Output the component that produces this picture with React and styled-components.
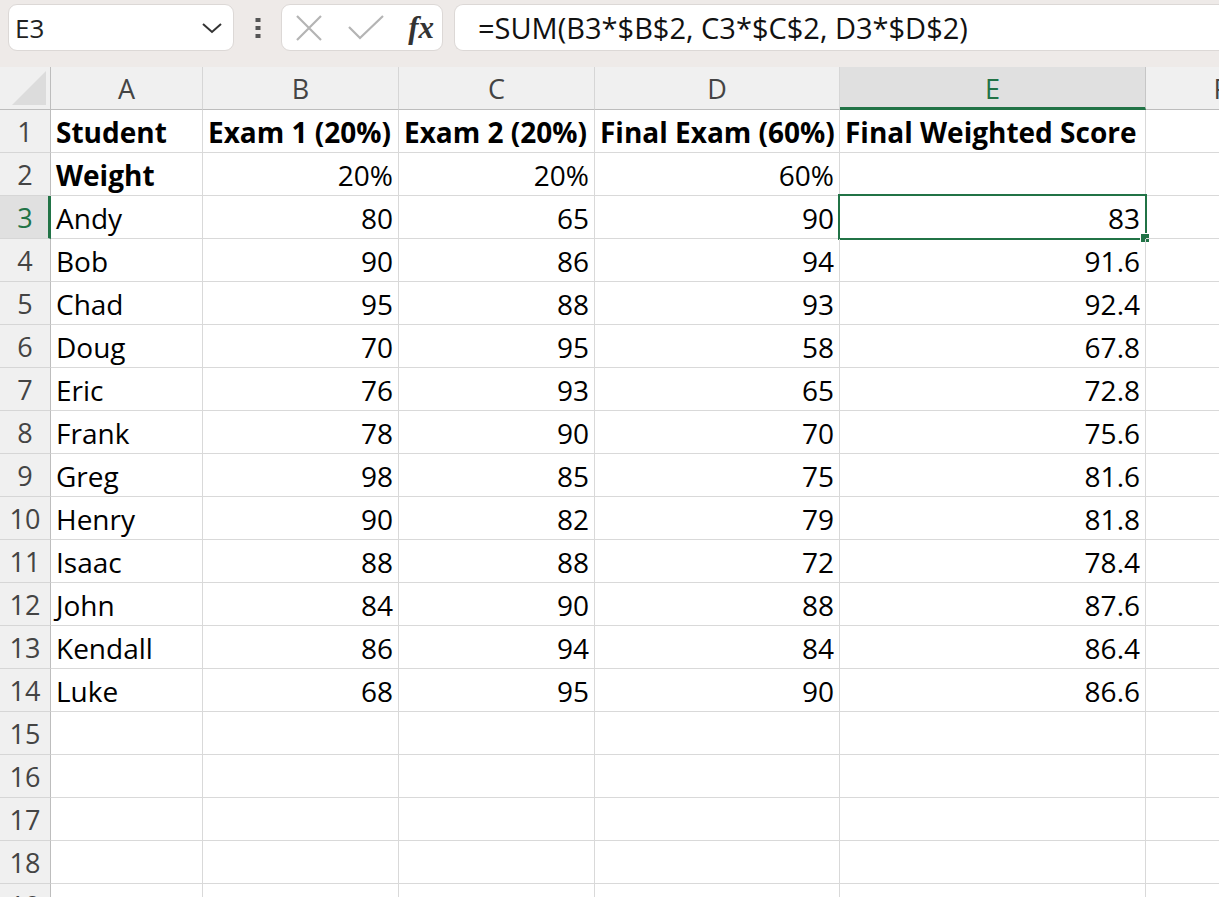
import React from 'react'
import styled, { createGlobalStyle } from 'styled-components'

const GlobalStyle = createGlobalStyle`
  html, body {
    margin: 0;
    padding: 0;
    background: #ffffff;
    overflow: hidden;
  }
  * { box-sizing: border-box; }
`

const Page = styled.div`
  width: 1219px;
  height: 897px;
  overflow: hidden;
  font-family: 'Open Sans', 'Noto Sans', sans-serif;
  color: #000;
`

const Toolbar = styled.div`
  height: 67px;
  background: #eeeae8;
  display: flex;
  align-items: flex-start;
  padding: 4px 0 0 8px;
`

const Box = styled.div`
  height: 47px;
  background: #fff;
  border: 1px solid #dcd8d6;
  border-radius: 9px;
  display: flex;
  align-items: center;
`

const NameBox = styled(Box)`
  width: 226px;
  padding: 0 10px 0 6px;
  justify-content: space-between;
  font-size: 26px;
  color: #222;
`

const Dots = styled.div`
  width: 47px;
  height: 47px;
  display: flex;
  align-items: center;
  justify-content: center;
`

const FxBox = styled(Box)`
  width: 162px;
  padding: 0 8px 0 12px;
  justify-content: space-between;
`

const FxLabel = styled.span`
  font-family: 'Liberation Serif', serif;
  font-style: italic;
  font-weight: 700;
  font-size: 31px;
  color: #333;
`

const FormulaBox = styled(Box)`
  flex: 1;
  margin-left: 11px;
  border-right: none;
  border-radius: 9px 0 0 9px;
  padding-left: 23px;
  font-size: 29px;
  color: #111;
`

const Grid = styled.div`
  display: grid;
  grid-template-columns: 51px 152px 196px 196px 245px 306px 150px;
  grid-auto-rows: 43px;
`

const Corner = styled.div`
  background: #f0f0f0;
  border-right: 1px solid #bdbdbd;
  border-bottom: 1px solid #bdbdbd;
  position: relative;
  &::after {
    content: '';
    position: absolute;
    right: 4px;
    bottom: 4px;
    width: 0;
    height: 0;
    border-left: 34px solid transparent;
    border-bottom: 34px solid #dcdcdc;
  }
`

const ColHead = styled.div`
  background: ${p => (p.$active ? '#e0e0e0' : '#f0f0f0')};
  border-right: 1px solid ${p => (p.$active ? '#c6c6c6' : '#d6d6d6')};
  border-bottom: ${p => (p.$active ? '3px solid #217346' : '1px solid #bdbdbd')};
  color: ${p => (p.$active ? '#217346' : '#444')};
  font-size: 27px;
  display: flex;
  align-items: center;
  justify-content: center;
  padding-top: ${p => (p.$active ? '2px' : '0')};
`

const RowHead = styled.div`
  background: ${p => (p.$active ? '#e0e0e0' : '#f0f0f0')};
  border-right: ${p => (p.$active ? '3px solid #217346' : '1px solid #bdbdbd')};
  border-bottom: 1px solid #d6d6d6;
  color: ${p => (p.$active ? '#217346' : '#444')};
  font-size: 27px;
  display: flex;
  align-items: center;
  justify-content: center;
  padding-left: ${p => (p.$active ? '2px' : '0')};
`

const Cell = styled.div`
  position: relative;
  border-right: 1px solid #d9d9d9;
  border-bottom: 1px solid #d9d9d9;
  font-size: 28px;
  font-weight: ${p => (p.$bold ? 700 : 400)};
  display: flex;
  align-items: center;
  justify-content: ${p => (p.$right ? 'flex-end' : 'flex-start')};
  padding: 1px 5px 0 5px;
  white-space: nowrap;
`

const Selection = styled.div`
  position: absolute;
  left: -2px;
  top: -2px;
  right: -2px;
  bottom: -2px;
  border: 2px solid #217346;
  pointer-events: none;
  &::after {
    content: '';
    position: absolute;
    right: -5px;
    bottom: -5px;
    width: 8px;
    height: 8px;
    background: #217346;
    border: 1px solid #fff;
  }
`

const cols = ['A', 'B', 'C', 'D', 'E', 'F']

const rows = [
  [{ v: 'Student', b: true }, { v: 'Exam 1 (20%)', b: true }, { v: 'Exam 2 (20%)', b: true }, { v: 'Final Exam (60%)', b: true }, { v: 'Final Weighted Score', b: true }],
  [{ v: 'Weight', b: true }, { v: '20%', r: true }, { v: '20%', r: true }, { v: '60%', r: true }, { v: '' }],
  ['Andy', 80, 65, 90, 83],
  ['Bob', 90, 86, 94, 91.6],
  ['Chad', 95, 88, 93, 92.4],
  ['Doug', 70, 95, 58, 67.8],
  ['Eric', 76, 93, 65, 72.8],
  ['Frank', 78, 90, 70, 75.6],
  ['Greg', 98, 85, 75, 81.6],
  ['Henry', 90, 82, 79, 81.8],
  ['Isaac', 88, 88, 72, 78.4],
  ['John', 84, 90, 88, 87.6],
  ['Kendall', 86, 94, 84, 86.4],
  ['Luke', 68, 95, 90, 86.6],
]

const norm = c =>
  typeof c === 'object' ? c : { v: c, r: typeof c === 'number' }

const App = () => {
  const allRows = [...rows, [], [], [], [], []]
  return (
    <Page>
      <GlobalStyle />
      <Toolbar>
        <NameBox>
          <span>E3</span>
          <svg width="22" height="14" viewBox="0 0 22 14">
            <path d="M2 3 L11 11 L20 3" fill="none" stroke="#333" strokeWidth="2" />
          </svg>
        </NameBox>
        <Dots>
          <svg width="6" height="22" viewBox="0 0 6 22">
            <rect x="0.5" y="1" width="5" height="4" fill="#555" />
            <rect x="0.5" y="9" width="5" height="4" fill="#555" />
            <rect x="0.5" y="17" width="5" height="4" fill="#555" />
          </svg>
        </Dots>
        <FxBox>
          <svg width="30" height="30" viewBox="0 0 30 30">
            <path d="M3 3 L27 27 M27 3 L3 27" stroke="#b4b4b4" strokeWidth="2.2" fill="none" />
          </svg>
          <svg width="38" height="28" viewBox="0 0 38 28">
            <path d="M2 13 L13 24 L36 2" stroke="#b4b4b4" strokeWidth="2.2" fill="none" />
          </svg>
          <FxLabel>fx</FxLabel>
        </FxBox>
        <FormulaBox>=SUM(B3*$B$2, C3*$C$2, D3*$D$2)</FormulaBox>
      </Toolbar>
      <Grid>
        <Corner />
        {cols.map(c => (
          <ColHead key={c} $active={c === 'E'}>{c}</ColHead>
        ))}
        {allRows.map((r, i) => (
          <React.Fragment key={i}>
            <RowHead $active={i === 2}>{i + 1}</RowHead>
            {cols.map((c, j) => {
              const cell = r[j] !== undefined ? norm(r[j]) : { v: '' }
              return (
                <Cell key={c} $bold={cell.b} $right={cell.r}>
                  {cell.v}
                  {i === 2 && c === 'E' && <Selection />}
                </Cell>
              )
            })}
          </React.Fragment>
        ))}
      </Grid>
    </Page>
  )
}

export default App
